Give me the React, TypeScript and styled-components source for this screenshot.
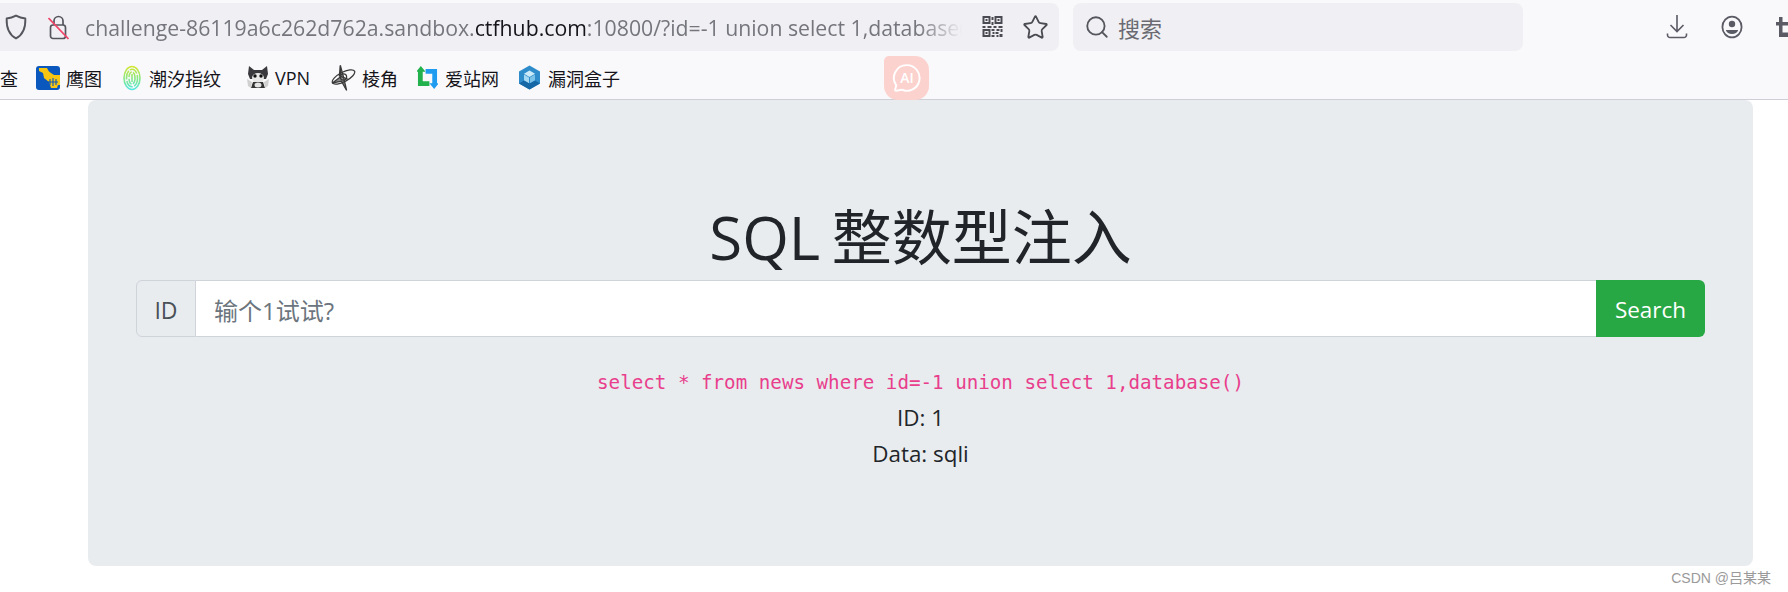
import styled, { createGlobalStyle } from "styled-components";
import { Search as SearchGlyph, Star } from "lucide-react";

const uiFont = `"Open Sans", "Noto Sans CJK SC", sans-serif`;

const GlobalStyle = createGlobalStyle`
  html, body {
    margin: 0;
    background: #ffffff;
    overflow: hidden;
  }
  * {
    box-sizing: border-box;
  }
`;

const ShieldIcon = () => (
  <svg width="24" height="26" viewBox="0 0 23 25" fill="none">
    <path
      d="M11.500 1.500c2.600 1.400 5.800 2.400 9 2.800.3 8.500-1.700 15.300-9 19.200C4.200 19.600 2.200 12.800 2.500 4.300c3.200-.4 6.400-1.400 9-2.800z"
      stroke="#55555e"
      strokeWidth="1.800"
      strokeLinejoin="round"
    />
  </svg>
);

const LockOff = () => (
  <svg width="21" height="25" viewBox="0 0 21 25" fill="none">
    <path d="M6 10V6a4.500 4.500 0 0 1 9 0v4" stroke="#55555e" strokeWidth="1.700" />
    <rect x="2.500" y="10" width="15" height="13.500" rx="2.500" stroke="#55555e" strokeWidth="1.700" />
    <path d="M0.500 3 20.500 24" stroke="#f0466a" strokeWidth="1.800" />
  </svg>
);

const QrCode = () => (
  <svg width="21" height="22" viewBox="0 0 20 22">
    <path
      fill="#4a4a52"
      fillRule="evenodd"
      d="M0 0h8v8H0zM2 2v4h4V2zM12 0h8v8h-8zM14 2v4h4V2zM0 13h8v8H0zM2 15v4h4v-4zM3 3h2v2H3zM15 3h2v2h-2zM3 16h2v2H3zM9 1h2v3H9zM9 6h2v3H9zM0 10h3v2H0zM5 10h4v2H5zM11 10h3v2h-3zM16 10h4v2h-4zM9 13h3v2H9zM14 13h3v2h-3zM18 13h2v3h-2zM10 16h2v2h-2zM13 16h3v2h-3zM9 19h3v2H9zM14 19h2v2h-2zM17 18h3v3h-3z"
    />
  </svg>
);

const Download = () => (
  <svg width="22" height="26" viewBox="0 0 22 26" fill="none" stroke="#5b5b66" strokeWidth="1.600">
    <path d="M11 1v16M4.500 11l6.500 6.500 6.500-6.500" />
    <path d="M1.500 19.500v1.500a2.500 2.500 0 0 0 2.500 2.500h14a2.500 2.500 0 0 0 2.500-2.500v-1.500" />
  </svg>
);

const Account = () => (
  <svg width="22" height="24" viewBox="0 0 22 24" fill="none">
    <ellipse cx="11" cy="12" rx="9.600" ry="10.400" stroke="#5b5b66" strokeWidth="1.800" />
    <circle cx="11" cy="9" r="3.200" fill="#5b5b66" />
    <path d="M4.800 15h12.400c-.8 2.600-3.200 4-6.200 4s-5.400-1.400-6.200-4z" fill="#5b5b66" />
  </svg>
);

const CutOffTool = () => (
  <svg width="12" height="20" viewBox="0 0 12 20">
    <path fill="#5b5b66" d="M3 0h3.500v5H12v3.500H6.500v7H12V20H3v-11.500H0V5h3z" />
  </svg>
);

const EagleIcon = () => (
  <svg width="24" height="24" viewBox="0 0 24 24">
    <rect width="24" height="24" rx="3" fill="#0a58bd" />
    <path fill="#f6c612" d="M3 2h8c1 2 2 4 4 5l3 2h6v10h-2l-1 3h-6l-2-6-5-4-1-5-4-2z" />
    <path stroke="#0a58bd" strokeWidth="1.100" d="M14 13v6M17 12v8M20 13v6M12 16h10" />
  </svg>
);

const FingerprintIcon = () => (
  <svg width="18" height="26" viewBox="0 0 18 26" fill="none">
    <defs>
      <linearGradient id="printFade" gradientUnits="userSpaceOnUse" x1="0" y1="1" x2="0" y2="25">
        <stop offset="0" stopColor="#d6e62e" />
        <stop offset="0.5" stopColor="#8be87f" />
        <stop offset="1" stopColor="#4fe6e2" />
      </linearGradient>
    </defs>
    <g stroke="url(#printFade)" strokeWidth="1.600">
      <ellipse cx="9" cy="13" rx="8" ry="11.500" />
      <ellipse cx="9" cy="13" rx="5.500" ry="8.800" strokeDasharray="9 1.500" />
      <ellipse cx="9" cy="13" rx="3" ry="6" strokeDasharray="6 1.500" />
      <path d="M9 9v8" />
    </g>
  </svg>
);

const CatIcon = () => (
  <svg width="24" height="26" viewBox="0 0 24 26">
    <path fill="#3a3a3e" d="M3 1l5 4h8l5-4 1 8-2 5H4L2 9z" />
    <ellipse cx="12" cy="13" rx="6" ry="5" fill="#e8e8e8" />
    <circle cx="9" cy="11" r="1.700" fill="#111" />
    <circle cx="15" cy="11" r="1.700" fill="#111" />
    <path fill="#333" d="M7 17h10l2 6H5z" />
    <path fill="#d0d0d0" d="M1 14l5 3-1 6-3-2zM23 14l-5 3 1 6 3-2z" />
    <ellipse cx="12" cy="20" rx="3.500" ry="2.500" fill="#e4e4e4" />
  </svg>
);

const PrismIcon = () => (
  <svg width="25" height="28" viewBox="0 0 24 26" fill="none" stroke="#3a3a3a" strokeWidth="1.200">
    <path d="M9 1l3 11 3 13-5-9L1 18l8-6z" fill="#8a8a8a" />
    <path d="M9 1l-1 10 8 3" />
    <ellipse cx="12" cy="12" rx="12" ry="4.500" transform="rotate(-28 12 12)" />
    <circle cx="12" cy="12" r="3" />
  </svg>
);

const ArrowsIcon = () => (
  <svg width="21" height="25" viewBox="0 0 22 24">
    <path fill="#22b14c" d="M4 0l5 6H6v10h7v5H1V6H-1z" />
    <path fill="#1f9cf0" d="M18 24l-5-6h3V8H9V3h12v15h2z" />
  </svg>
);

const CubeIcon = () => (
  <svg width="21" height="25" viewBox="0 0 21 24">
    <path fill="#2f8ccb" d="M10.500 0 21 6v12l-10.500 6L0 18V6z" />
    <path fill="#cdeaf8" d="M10.500 5 16 8.200 10.500 11.400 5 8.200z" />
    <path fill="#a5d8f2" d="M5 9l5 3v6l-5-3z" />
    <path fill="#7cc3ea" d="M16 9l-5 3v6l5-3z" />
    <path fill="#1567a6" d="M0 18l10.500 6L21 18l-5-3-5.500 3L5 15z" />
  </svg>
);

const AiGlyph = () => (
  <svg width="30" height="31" viewBox="0 0 28 29" fill="none">
    <path
      d="M14 2a12 12 0 1 1-5 23l-5 1c-1 0-1.500-.8-1-1.500l1-3.500A12 12 0 0 1 14 2z"
      stroke="#ffffff"
      strokeWidth="1.800"
    />
    <text x="14" y="19" textAnchor="middle" fontSize="13" fontWeight="600" fill="#ffffff" fontFamily="Open Sans">
      AI
    </text>
  </svg>
);

const bookmarks = [
  { label: "鹰图", icon: <EagleIcon />, gap: 6, width: 87 },
  { label: "潮汐指纹", icon: <FingerprintIcon />, gap: 8, width: 123 },
  { label: "VPN", icon: <CatIcon />, gap: 5, width: 85 },
  { label: "棱角", icon: <PrismIcon />, gap: 6, width: 86 },
  { label: "爱站网", icon: <ArrowsIcon />, gap: 7, width: 102 },
  { label: "漏洞盒子", icon: <CubeIcon />, gap: 8, width: 110 },
];

export default function App() {
  return (
    <Page>
      <GlobalStyle />
      <TopBar>
        <UrlBar>
          <ShieldIcon />
          <LockOff />
          <UrlText>
            challenge-86119a6c262d762a.sandbox.<strong>ctfhub.com</strong>:10800/?id=-1 union select 1,database()
          </UrlText>
          <QrCode />
          <Star size={27} color="#4a4a52" strokeWidth={1.6} />
        </UrlBar>
        <SearchBar>
          <SearchGlyph size={26} color="#55555e" strokeWidth={1.7} />
          <span>搜索</span>
        </SearchBar>
        <ToolIcons>
          <Download />
          <Account />
          <CutOffTool />
        </ToolIcons>
      </TopBar>
      <BookmarksBar>
        <ClippedBookmark>查</ClippedBookmark>
        {bookmarks.map((b) => (
          <Bookmark key={b.label} $gap={b.gap} $width={b.width}>
            {b.icon}
            <span>{b.label}</span>
          </Bookmark>
        ))}
      </BookmarksBar>
      <AiBadge>
        <AiGlyph />
      </AiBadge>
      <Content>
        <Jumbotron>
          <Title>SQL 整数型注入</Title>
          <InputGroup>
            <Prepend>ID</Prepend>
            <Field placeholder="输个1试试?" readOnly />
            <SearchButton>Search</SearchButton>
          </InputGroup>
          <Result>
            <SqlCode>select * from news where id=-1 union select 1,database()</SqlCode>
            <ResultLine>ID: 1</ResultLine>
            <ResultLine>Data: sqli</ResultLine>
          </Result>
        </Jumbotron>
      </Content>
      <Watermark>CSDN @吕某某</Watermark>
    </Page>
  );
}

const Page = styled.div`
  position: relative;
  width: 1788px;
  height: 592px;
  overflow: hidden;
  font-family: ${uiFont};
  background: #ffffff;
`;

const TopBar = styled.header`
  height: 51px;
  padding-top: 3px;
  background: #f9f9fb;
  display: flex;
`;

const UrlBar = styled.div`
  width: 1059px;
  height: 48px;
  padding: 0 10px 0 4px;
  background: #f0f0f4;
  border-radius: 0 8px 8px 0;
  display: flex;
  align-items: center;
  flex-shrink: 0;

  > svg {
    flex-shrink: 0;
  }
  > svg:nth-child(2) {
    margin: 0 16px 0 20px;
  }
  > svg:nth-last-child(2) {
    margin: 0 19px 0 11px;
  }
`;

const UrlText = styled.div`
  flex: 1;
  min-width: 0;
  white-space: nowrap;
  overflow: hidden;
  font-size: 21.250px;
  color: #75757d;
  -webkit-mask-image: linear-gradient(to right, #000 94%, transparent 99%);
  mask-image: linear-gradient(to right, #000 94%, transparent 99%);

  strong {
    font-weight: 400;
    color: #15141a;
  }
`;

const SearchBar = styled.div`
  width: 450px;
  height: 48px;
  margin-left: 14px;
  padding-left: 11px;
  background: #f0f0f4;
  border-radius: 8px;
  display: flex;
  align-items: center;
  gap: 8px;
  font-size: 22px;
  color: #6a6a72;
  flex-shrink: 0;
`;

const ToolIcons = styled.div`
  display: flex;
  align-items: center;
  gap: 33px;
  margin-left: 143px;
  flex-shrink: 0;
`;

const BookmarksBar = styled.nav`
  height: 49px;
  padding-top: 5px;
  background: #f9f9fb;
  border-bottom: 1px solid #cfcfd8;
  display: flex;
  align-items: center;
  font-size: 18px;
  color: #15141a;
`;

const ClippedBookmark = styled.span`
  width: 36px;
  flex-shrink: 0;
`;

const Bookmark = styled.div<{ $gap: number; $width: number }>`
  width: ${({ $width }) => $width}px;
  display: flex;
  align-items: center;
  gap: ${({ $gap }) => $gap}px;
  flex-shrink: 0;

  svg {
    flex-shrink: 0;
  }
`;

const AiBadge = styled.div`
  position: absolute;
  left: 884px;
  top: 56px;
  width: 45px;
  height: 44px;
  background: #fcd2cf;
  border-radius: 5px 14px 14px 14px;
  display: flex;
  align-items: center;
  justify-content: center;
  z-index: 2;
`;

const Content = styled.main`
  padding-left: 88px;
`;

const Jumbotron = styled.section`
  width: 1665px;
  height: 466px;
  padding: 96px 48px 0;
  background: #e9ecef;
  border-radius: 8px;
  display: flex;
  flex-direction: column;
  align-items: stretch;
`;

const Title = styled.h1`
  margin: 0;
  height: 84px;
  font-size: 60px;
  font-weight: 400;
  line-height: 82px;
  word-spacing: -4px;
  text-align: center;
  color: #212529;
  font-family: ${uiFont};
`;

const InputGroup = styled.div`
  height: 57px;
  display: flex;
`;

const Prepend = styled.div`
  width: 60px;
  padding-top: 3px;
  background: #e9ecef;
  border: 1px solid #ced4da;
  border-radius: 6px 0 0 6px;
  font-size: 23px;
  color: #495057;
  display: flex;
  align-items: center;
  justify-content: center;
`;

const Field = styled.input`
  flex: 1;
  min-width: 0;
  padding: 3px 18px 0;
  font-size: 24px;
  font-family: ${uiFont};
  background: #ffffff;
  border: 1px solid #ced4da;
  border-left: 0;
  border-right: 0;
  outline: none;

  &::placeholder {
    color: #6c757d;
    opacity: 1;
  }
`;

const SearchButton = styled.button`
  width: 109px;
  padding: 2px 0 0;
  background: #28a745;
  color: #ffffff;
  font-size: 22.500px;
  font-family: ${uiFont};
  border: 0;
  border-radius: 0 6px 6px 0;
`;

const Result = styled.div`
  margin-top: 29px;
  text-align: center;
  color: #212529;
`;

const SqlCode = styled.code`
  display: block;
  font-family: "DejaVu Sans Mono", monospace;
  font-size: 19.200px;
  line-height: 34px;
  color: #e83e8c;
`;

const ResultLine = styled.div`
  font-size: 22.400px;
  line-height: 36px;
`;

const Watermark = styled.div`
  position: absolute;
  right: 17px;
  bottom: 4px;
  font-size: 14px;
  line-height: 20px;
  color: #9a9a9a;
  font-family: "Liberation Sans", "Noto Sans CJK SC", sans-serif;
`;
